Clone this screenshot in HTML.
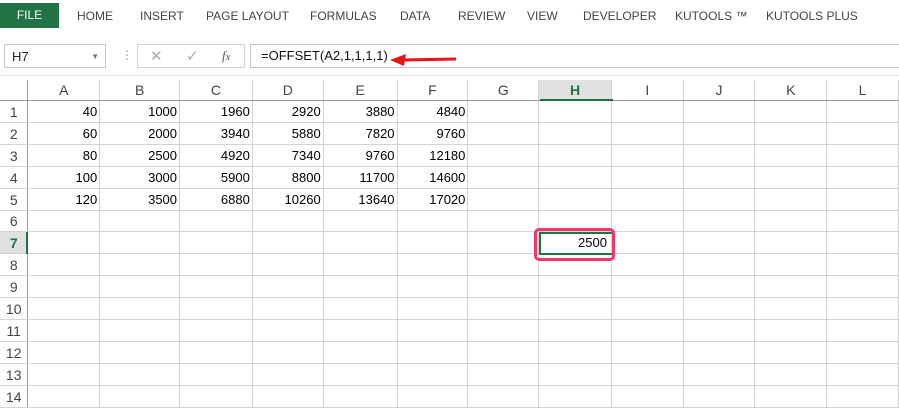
<!DOCTYPE html><html><head><style>
body{margin:0;width:899px;height:408px;overflow:hidden;background:#fff;font-family:"Liberation Sans",sans-serif;position:relative}
.rib{position:absolute;top:0;left:0;width:899px;height:32px;background:#fff}
.file{position:absolute;left:0;top:3px;width:59px;height:25px;background:#217346;color:#fff;font-size:12px;line-height:25px;text-align:center}
.tab{position:absolute;top:4px;line-height:25px;font-size:12px;color:#444}
.nb{position:absolute;left:4px;top:44px;width:102px;height:24px;border:1px solid #c6c6c6;font-size:13px;line-height:24px;box-sizing:border-box;padding-left:7px;color:#222}
.fb{position:absolute;left:250px;top:44px;width:660px;height:24px;border:1px solid #c6c6c6;box-sizing:border-box;font-size:13px;line-height:22px;padding-left:10px;color:#111}
.ib{position:absolute;left:137px;top:44px;width:108px;height:24px;border:1px solid #d4d4d4;box-sizing:border-box}
table{position:absolute;left:0;top:80px;border-collapse:collapse;table-layout:fixed;font-size:13px}
td{border:1px solid #d4d4d4;padding:0 2px;text-align:right;color:#000;overflow:hidden;white-space:nowrap;height:21px;line-height:16px}
tr.h td{text-align:center;color:#444;height:20px;border-top:none;border-bottom-color:#9b9b9b;background:#fff;font-size:14px}
td.r{text-align:center;color:#444;border-left:none;border-right-color:#9b9b9b;font-size:14px;padding:0}
tr.s td{height:20px}
</style></head><body>
<div class="rib"><div class="file">FILE</div>
<span class="tab" style="left:77px">HOME</span><span class="tab" style="left:140px">INSERT</span><span class="tab" style="left:206px">PAGE LAYOUT</span><span class="tab" style="left:310px">FORMULAS</span><span class="tab" style="left:400px">DATA</span><span class="tab" style="left:458px">REVIEW</span><span class="tab" style="left:527px">VIEW</span><span class="tab" style="left:583px">DEVELOPER</span><span class="tab" style="left:675px">KUTOOLS ™</span><span class="tab" style="left:766px">KUTOOLS PLUS</span></div>
<div class="nb">H7<span style="position:absolute;right:6px;top:0;font-size:8px;color:#777">▼</span></div>
<div style="position:absolute;left:121px;top:48px;color:#999;font-size:12px">⋮</div>
<div class="ib"><span style="position:absolute;left:12px;top:2px;color:#aaa;font-size:15px">✕</span><span style="position:absolute;left:48px;top:2px;color:#aaa;font-size:15px">✓</span><span style="position:absolute;left:84px;top:3px;color:#555;font-size:13px;font-style:italic;font-family:'Liberation Serif',serif">f<small>x</small></span></div>
<div class="fb">=OFFSET(A2,1,1,1,1)</div>
<svg style="position:absolute;left:388px;top:52px" width="70" height="16"><path d="M68 7 L14 8" stroke="#e8141b" stroke-width="3"/><path d="M2 8 L18 2 L16 14 Z" fill="#e8141b"/></svg>
<div style="position:absolute;left:0;top:75px;width:899px;height:1px;background:#e2e2e2"></div>
<table>
<colgroup><col style="width:28px"><col style="width:72px"><col style="width:80px"><col style="width:73px"><col style="width:71px"><col style="width:74px"><col style="width:71px"><col style="width:71px"><col style="width:73px"><col style="width:72px"><col style="width:72px"><col style="width:72px"><col style="width:72px"></colgroup>
<tr class="h"><td class="r" style="border-bottom-color:#9b9b9b"></td><td>A</td><td>B</td><td>C</td><td>D</td><td>E</td><td>F</td><td>G</td><td style="background:#e1e1e1;color:#217346;font-weight:bold">H</td><td>I</td><td>J</td><td>K</td><td>L</td></tr>
<tr><td class="r">1</td><td>40</td><td>1000</td><td>1960</td><td>2920</td><td>3880</td><td>4840</td><td></td><td></td><td></td><td></td><td></td><td></td></tr>
<tr><td class="r">2</td><td>60</td><td>2000</td><td>3940</td><td>5880</td><td>7820</td><td>9760</td><td></td><td></td><td></td><td></td><td></td><td></td></tr>
<tr><td class="r">3</td><td>80</td><td>2500</td><td>4920</td><td>7340</td><td>9760</td><td>12180</td><td></td><td></td><td></td><td></td><td></td><td></td></tr>
<tr><td class="r">4</td><td>100</td><td>3000</td><td>5900</td><td>8800</td><td>11700</td><td>14600</td><td></td><td></td><td></td><td></td><td></td><td></td></tr>
<tr><td class="r">5</td><td>120</td><td>3500</td><td>6880</td><td>10260</td><td>13640</td><td>17020</td><td></td><td></td><td></td><td></td><td></td><td></td></tr>
<tr class="s"><td class="r">6</td><td></td><td></td><td></td><td></td><td></td><td></td><td></td><td></td><td></td><td></td><td></td><td></td></tr>
<tr><td class="r" style="background:#e1e1e1;color:#217346;font-weight:bold">7</td><td></td><td></td><td></td><td></td><td></td><td></td><td></td><td style="padding-right:4px">2500</td><td></td><td></td><td></td><td></td></tr>
<tr><td class="r">8</td><td></td><td></td><td></td><td></td><td></td><td></td><td></td><td></td><td></td><td></td><td></td><td></td></tr>
<tr><td class="r">9</td><td></td><td></td><td></td><td></td><td></td><td></td><td></td><td></td><td></td><td></td><td></td><td></td></tr>
<tr><td class="r">10</td><td></td><td></td><td></td><td></td><td></td><td></td><td></td><td></td><td></td><td></td><td></td><td></td></tr>
<tr><td class="r">11</td><td></td><td></td><td></td><td></td><td></td><td></td><td></td><td></td><td></td><td></td><td></td><td></td></tr>
<tr><td class="r">12</td><td></td><td></td><td></td><td></td><td></td><td></td><td></td><td></td><td></td><td></td><td></td><td></td></tr>
<tr><td class="r">13</td><td></td><td></td><td></td><td></td><td></td><td></td><td></td><td></td><td></td><td></td><td></td><td></td></tr>
<tr><td class="r">14</td><td></td><td></td><td></td><td></td><td></td><td></td><td></td><td></td><td></td><td></td><td></td><td></td></tr>
</table>
<div style="position:absolute;left:540px;top:99px;width:73px;height:2px;background:#217346"></div>
<div style="position:absolute;left:26px;top:232px;width:2px;height:22px;background:#217346"></div>
<div style="position:absolute;left:539px;top:232px;width:71px;height:19px;border:2px solid #217346"></div>
<div style="position:absolute;left:534px;top:228px;width:75px;height:27px;border:3px solid #f0386b;border-radius:5px"></div>
</body></html>
